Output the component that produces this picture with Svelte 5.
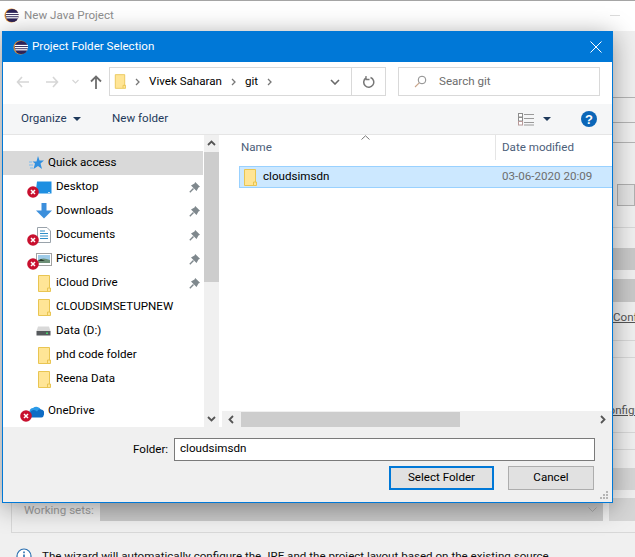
<script>
  const quick = [
    { name: 'Desktop', icon: 'desktop', pin: true, bad: true },
    { name: 'Downloads', icon: 'downloads', pin: true, bad: false },
    { name: 'Documents', icon: 'documents', pin: true, bad: true },
    { name: 'Pictures', icon: 'pictures', pin: true, bad: true },
    { name: 'iCloud Drive', icon: 'folder', pin: true, bad: false },
    { name: 'CLOUDSIMSETUPNEW', icon: 'folder', pin: false, bad: false },
    { name: 'Data (D:)', icon: 'drive', pin: false, bad: false },
    { name: 'phd code folder', icon: 'folder', pin: false, bad: false },
    { name: 'Reena Data', icon: 'folder', pin: false, bad: false }
  ];
</script>

{#snippet eclipse()}
  <svg class="eclipse" width="15" height="15" viewBox="0 0 16 16">
    <circle cx="8" cy="8" r="7.500" fill="#e8942e" />
    <circle cx="8.700" cy="8" r="7" fill="#2c2358" />
    <rect x="2" y="5.200" width="14" height="1.300" fill="#fff" />
    <rect x="2" y="7.500" width="14" height="1.300" fill="#fff" />
    <rect x="2.400" y="9.800" width="13" height="1.300" fill="#fff" />
  </svg>
{/snippet}

{#snippet folder()}
  <svg width="14" height="17" viewBox="0 0 14 17">
    <path d="M1.500 .5H12.500V13H13.500V16.500H1.500Z" fill="#ffe596" stroke="#e9c552" />
    <path d="M10.500 16V13H13" fill="none" stroke="#e9c552" />
  </svg>
{/snippet}

{#snippet badge()}
  <svg class="badge" width="12" height="12" viewBox="0 0 12 12">
    <circle cx="6" cy="6" r="5.800" fill="#c8102e" />
    <path d="M4 4L8 8M8 4L4 8" stroke="#fff" stroke-width="1.500" />
  </svg>
{/snippet}

{#snippet pin()}
  <svg class="pin" width="11" height="11" viewBox="0 0 11 11">
    <path d="M6.200 0L11 4.800L9.500 5.500L7.500 9L2 3.500L5.500 1.500Z" fill="#7f888d" />
    <path d="M4.500 6.500L.8 10.200" stroke="#7f888d" stroke-width="1.400" />
  </svg>
{/snippet}

{#snippet navIcon(kind)}
  {#if kind === 'folder'}
    {@render folder()}
  {:else if kind === 'desktop'}
    <svg width="17" height="13" viewBox="0 0 17 13">
      <path d="M2 .5H16.500V12.500H0.500Z" fill="#1e8fe1" />
      <rect x="13" y="11" width="2" height="1" fill="#bfe3fb" />
    </svg>
  {:else if kind === 'downloads'}
    <svg width="16" height="16" viewBox="0 0 16 16">
      <path d="M5.500 0H10.500V7.500H16L8 15.500L0 7.500H5.500Z" fill="#3c8fdc" />
    </svg>
  {:else if kind === 'documents'}
    <svg width="14" height="16" viewBox="0 0 14 16">
      <path d="M.5 .5H10L13.500 4V15.500H.5Z" fill="#fff" stroke="#9aa3ab" />
      <path d="M3 4H8M3 6.500H11M3 9H11M3 11.500H11" stroke="#2f8fc9" />
    </svg>
  {:else if kind === 'pictures'}
    <svg width="16" height="13" viewBox="0 0 16 13">
      <rect x=".5" y=".5" width="15" height="12" fill="#fff" stroke="#a2a2a2" />
      <rect x="2" y="2" width="12" height="5" fill="#9fcbe8" />
      <path d="M2 7Q7 4 14 7V10H2Z" fill="#6d8f76" />
      <path d="M2 8H9L5 6Z" fill="#273a2c" />
    </svg>
  {:else if kind === 'drive'}
    <svg width="15" height="10" viewBox="0 0 15 10">
      <path d="M2 .5H13L14.500 5H.5Z" fill="#d9d9d9" />
      <rect x=".5" y="5" width="14" height="4.500" fill="#55595c" />
      <rect x="10" y="6.500" width="2" height="1.500" fill="#44d36a" />
    </svg>
  {/if}
{/snippet}

<div class="desk">
  <div class="wizard">
    <header class="wiz-title">
      {@render eclipse()}
      <span class="t">New Java Project</span>
      <i class="minimize"></i>
    </header>
    <div class="wiz-body">
      <div class="rule r1"></div>
      <div class="rule r2"></div>
      <div class="rule r3"></div>
      <div class="wbtn b1"></div>
      <div class="rule r4"></div>
      <div class="bar b2"></div>
      <div class="bar b3"></div>
      <div class="link l1"><u>Conf</u></div>
      <div class="rule r5"></div>
      <div class="rule r6"></div>
      <div class="link l2"><u>Configu</u></div>
      <div class="rule r7"></div>
      <div class="rule r8"></div>
      <div class="bar b4"></div>
      <div class="sets">
        <span class="sets-label">Working sets:</span>
        <span class="sets-select">
          <svg width="9" height="5" viewBox="0 0 9 5"><path d="M.5 .5L4.500 4.500L8.500 .5" fill="none" stroke="#a8a8a8" /></svg>
        </span>
        <span class="sets-btn"></span>
      </div>
      <div class="info">
        <svg width="16" height="16" viewBox="0 0 16 16">
          <circle cx="8" cy="8" r="7" fill="#fff" stroke="#2a6fb0" stroke-width="1.200" />
          <rect x="7.200" y="3.500" width="1.600" height="1.700" fill="#2a6fb0" />
          <rect x="7.200" y="6.500" width="1.600" height="6" fill="#2a6fb0" />
        </svg>
        <span>The wizard will automatically configure the JRE and the project layout based on the existing source</span>
      </div>
    </div>
  </div>

  <section class="dialog">
    <header class="title">
      {@render eclipse()}
      <span class="t">Project Folder Selection</span>
      <svg class="close" width="12" height="12" viewBox="0 0 12 12">
        <path d="M.5 .5L11.500 11.500M11.500 .5L.5 11.500" stroke="#fff" stroke-width="1" />
      </svg>
    </header>

    <div class="nav">
      <div class="arrows">
        <svg width="13" height="12" viewBox="0 0 13 12"><path d="M6 1L1.500 6L6 11M1.500 6H13" fill="none" stroke="#d6d6d6" stroke-width="1.600" /></svg>
        <svg class="fwd" width="13" height="12" viewBox="0 0 13 12"><path d="M7 1L11.500 6L7 11M11.500 6H0" fill="none" stroke="#d6d6d6" stroke-width="1.600" /></svg>
        <svg class="down" width="7" height="5" viewBox="0 0 7 5"><path d="M.5 1L3.500 4L6.500 1" fill="none" stroke="#d6d6d6" stroke-width="1.200" /></svg>
        <svg class="up" width="12" height="14" viewBox="0 0 12 14"><path d="M1 6.500L6 1.500L11 6.500M6 1.500V14" fill="none" stroke="#6e6e6e" stroke-width="1.800" /></svg>
      </div>
      <div class="address">
        <span class="addr-folder">{@render folder()}</span>
        <svg class="crumb" width="5" height="8" viewBox="0 0 5 8"><path d="M1 1L4 4L1 7" fill="none" stroke="#777" stroke-width="1.300" /></svg>
        <span class="addr-name t">Vivek Saharan</span>
        <svg class="crumb" width="5" height="8" viewBox="0 0 5 8"><path d="M1 1L4 4L1 7" fill="none" stroke="#777" stroke-width="1.300" /></svg>
        <span class="addr-name t">git</span>
        <svg class="crumb" width="5" height="8" viewBox="0 0 5 8"><path d="M1 1L4 4L1 7" fill="none" stroke="#777" stroke-width="1.300" /></svg>
        <span class="grow"></span>
        <span class="addr-drop">
          <svg width="10" height="6" viewBox="0 0 10 6"><path d="M1 1L5 5L9 1" fill="none" stroke="#6a6a6a" stroke-width="1.600" /></svg>
        </span>
        <span class="addr-refresh">
          <svg width="12" height="12" viewBox="0 0 12 12"><path d="M7.500 1.500A5 5 0 1 1 3 2" fill="none" stroke="#777" stroke-width="1.500" /><path d="M3 0V3.500H6.500" fill="none" stroke="#777" stroke-width="1.300" /></svg>
        </span>
      </div>
      <div class="search">
        <svg width="13" height="13" viewBox="0 0 13 13"><circle cx="8" cy="5" r="3.800" fill="none" stroke="#8a8a8a" /><path d="M5.200 7.800L1 12" stroke="#c9a58a" stroke-width="1.100" /></svg>
        <span class="t">Search git</span>
      </div>
    </div>

    <div class="toolbar">
      <span class="organize t">Organize</span>
      <i class="caret"></i>
      <span class="newfolder t">New folder</span>
      <span class="grow"></span>
      <svg class="views" width="16" height="13" viewBox="0 0 16 13">
        <rect x=".5" y=".5" width="4" height="3.500" fill="#fff" stroke="#8d8d8d" />
        <rect x=".5" y="4.500" width="4" height="3.500" fill="#fff" stroke="#8d8d8d" />
        <rect x=".5" y="8.500" width="4" height="3.500" fill="#fff" stroke="#b89a9a" />
        <path d="M6 1.500H16M6 5.500H16M6 9.500H16M6 12H16" stroke="#9a9a9a" />
      </svg>
      <i class="caret viewcaret"></i>
      <svg class="help" width="16" height="16" viewBox="0 0 16 16">
        <circle cx="8" cy="8" r="8" fill="#0b66b8" />
        <text x="8" y="12.500" text-anchor="middle" class="help-q">?</text>
      </svg>
    </div>

    <div class="panes">
      <nav class="tree">
        <div class="row top selected">
          <svg width="15" height="14" viewBox="0 0 15 14">
            <path d="M9 0L10.500 4.500H15L11.500 7.500L13 13L9 10L4.500 13L6 7.500L3.500 5.500H7.500Z" fill="#2f8fe0" />
            <path d="M0 6H3M0 9H4M1 12H4" stroke="#7cbcef" />
          </svg>
          <span class="t">Quick access</span>
        </div>
        {#each quick as item}
          <div class="row">
            {#if item.bad}{@render badge()}{/if}
            <span class="icon">{@render navIcon(item.icon)}</span>
            <span class="label t">{item.name}</span>
            {#if item.pin}{@render pin()}{/if}
          </div>
        {/each}
        <div class="row top drive">
          {@render badge()}
          <svg width="17" height="13" viewBox="0 0 17 13">
            <path d="M1.500 11A2.500 2.500 0 0 1 2.500 6.500A4 4 0 0 1 6 3A5 5 0 0 1 14 5Q16.500 6 16.500 9Q16.500 11 14.500 11Z" fill="#2c9be8" />
            <path d="M1.500 12.500A2.500 2.500 0 0 1 3 8A4 4 0 0 1 10 6.500A3 3 0 0 1 16.800 10Q16.500 12.500 14.500 12.500Z" fill="#0f6cc4" />
          </svg>
          <span class="t">OneDrive</span>
        </div>
      </nav>

      <div class="vscroll">
        <svg width="9" height="6" viewBox="0 0 9 6"><path d="M1 5L4.500 1.500L8 5" fill="none" stroke="#555" stroke-width="1.800" /></svg>
        <div class="vthumb"></div>
        <span class="grow"></span>
        <svg width="9" height="6" viewBox="0 0 9 6"><path d="M1 1L4.500 4.500L8 1" fill="none" stroke="#555" stroke-width="1.800" /></svg>
      </div>

      <div class="files">
        <div class="head">
          <span class="col-name t">Name</span>
          <svg class="sort" width="9" height="5" viewBox="0 0 9 5"><path d="M.5 4.500L4.500 .8L8.500 4.500" fill="none" stroke="#777" /></svg>
          <span class="col-date t">Date modified</span>
        </div>
        <div class="file">
          <span class="file-icon">{@render folder()}</span>
          <span class="file-name t">cloudsimsdn</span>
          <span class="file-date t">03-06-2020 20:09</span>
        </div>
        <span class="grow"></span>
        <div class="hscroll">
          <svg width="6" height="9" viewBox="0 0 6 9"><path d="M5 1L1.500 4.500L5 8" fill="none" stroke="#555" stroke-width="1.800" /></svg>
          <div class="hthumb"></div>
          <span class="grow"></span>
          <svg width="6" height="9" viewBox="0 0 6 9"><path d="M1 1L4.500 4.500L1 8" fill="none" stroke="#555" stroke-width="1.800" /></svg>
        </div>
      </div>
    </div>

    <footer class="foot">
      <div class="foot-row">
        <label for="folder-input">Folder:</label>
        <input id="folder-input" value="cloudsimsdn" />
      </div>
      <div class="foot-buttons">
        <button class="primary">Select Folder</button>
        <button>Cancel</button>
      </div>
      <svg class="grip" width="9" height="9" viewBox="0 0 9 9">
        <path d="M6 0h2v2H6zM3 3h2v2H3zM6 3h2v2H6zM0 6h2v2H0zM3 6h2v2H3zM6 6h2v2H6z" fill="#b5b5b5" />
      </svg>
    </footer>
  </section>
</div>

<style>
  :global(body) { margin: 0; background: #f0f0f0; }
  .desk {
    position: relative;
    width: 635px;
    height: 557px;
    overflow: hidden;
    font-family: Roboto, "Liberation Sans", sans-serif;
    font-size: 11.6px;
    color: #000;
  }
  .grow { flex: 1; }
  .t { padding-bottom: 2px; }

  /* wizard behind */
  .wizard { display: flex; flex-direction: column; height: 100%; border-top: 1px solid #a5a5a5; box-sizing: border-box; }
  .wiz-title {
    height: 30px; background: #fff; display: flex; align-items: center; gap: 5px;
    padding-left: 4px; color: #8e8e8e; flex: none; position: relative; padding-bottom: 1px; box-sizing: border-box;
  }
  .minimize { position: absolute; left: 610px; top: 14px; width: 10px; height: 1px; background: #dcdcdc; }
  .wiz-body { flex: 1; padding-left: 11px; overflow: hidden; }
  .rule { height: 1px; background: #b4b4b4; }
  .r1 { margin-top: 66px; }
  .r2 { margin-top: 24px; }
  .r3 { margin-top: 19px; }
  .wbtn { height: 22px; margin: 41px 0 0 606px; background: #e4e4e4; border: 1px solid #b0b0b0; box-sizing: border-box; }
  .r4 { margin-top: 21px; background: #d8d8d8; }
  .bar { background: #c9c9c9; margin-left: 100px; }
  .b2 { height: 22px; margin-top: 20px; }
  .b3 { height: 23px; margin-top: 9px; }
  .link { height: 16px; color: #555; white-space: nowrap; }
  .l1 { margin: 8px 0 0 602px; }
  .r5 { margin-top: 14px; background: #d8d8d8; }
  .r6 { margin-top: 16px; background: #d8d8d8; }
  .l2 { margin: 45px 0 0 590px; }
  .r7 { margin-top: 13px; background: #d8d8d8; }
  .r8 { margin-top: 16px; background: #d8d8d8; }
  .b4 { height: 22px; margin-top: 18px; background: #d6d6d6; }
  .sets {
    height: 35px; margin: 8px 0 0 0; width: 700px; box-sizing: border-box;
    border-bottom: 1px solid #d8d8d8; border-left: 1px solid #d8d8d8; display: flex; align-items: flex-start; padding-left: 12px;
  }
  .sets-label { width: 76px; color: #a0a0a0; line-height: 24px; }
  .sets-select { width: 503px; height: 23px; background: #c9c9c9; display: flex; align-items: center; justify-content: flex-end; padding-right: 6px; box-sizing: border-box; }
  .sets-btn { width: 40px; height: 23px; margin-left: 6px; background: #d6d6d6; }
  .info { display: flex; gap: 10px; padding: 12px 0 0 5px; white-space: nowrap; align-items: flex-start; color: #111; line-height: 22px; }
  .info svg { flex: none; margin-top: 3px; }

  /* dialog */
  .dialog {
    position: absolute; left: 2px; top: 31px; width: 611px; height: 472px; box-sizing: border-box;
    border: 1px solid #0078d7; background: #f0f0f0; display: flex; flex-direction: column;
    box-shadow: 0 4px 24px rgba(0, 0, 0, 0.38);
  }
  .title {
    height: 30px; flex: none; background: #0078d7; display: flex; align-items: center;
    padding-left: 10px; color: #fff; gap: 4px; position: relative;
  }
  .close { position: absolute; right: 10px; top: 9px; }

  .nav { height: 42px; flex: none; background: #fff; display: flex; align-items: flex-start; padding-top: 5px; box-sizing: border-box; }
  .arrows { width: 106px; height: 29px; display: flex; align-items: center; padding-left: 13px; box-sizing: border-box; flex: none; }
  .fwd { margin-left: 17px; }
  .down { margin-left: 13px; }
  .up { margin-left: 11px; }
  .address {
    width: 277px; height: 29px; box-sizing: border-box; border: 1px solid #d9d9d9; display: flex; align-items: center;
    padding-left: 4px; flex: none;
  }
  .addr-folder { display: flex; width: 12px; }
  .addr-name { margin-left: 9px; }
  .crumb { margin-left: 9px; }
  .addr-drop { width: 32px; height: 100%; display: flex; align-items: center; justify-content: center; border-right: 1px solid #d9d9d9; }
  .addr-refresh { width: 33px; display: flex; justify-content: center; }
  .search {
    width: 202px; height: 29px; margin-left: 12px; box-sizing: border-box; border: 1px solid #d9d9d9; flex: none;
    display: flex; align-items: center; gap: 12px; padding-left: 15px; color: #6d6d6d;
  }

  .toolbar {
    height: 31px; flex: none; box-sizing: border-box; background: #f5f6f7; border-bottom: 1px solid #e5e5e5;
    display: flex; align-items: center; color: #1e395b; padding-left: 18px;
  }
  .organize { width: 47px; }
  .caret { width: 0; height: 0; border: 4px solid transparent; border-top: 4px solid #1e395b; border-bottom: 0; margin-left: 5px; }
  .newfolder { margin-left: 31px; }
  .viewcaret { margin-left: 9px; }
  .help { margin: 0 15px 0 30px; }
  .help-q { font: bold 13px "Liberation Sans", sans-serif; fill: #fff; }

  .panes { height: 292px; flex: none; display: flex; background: #fff; }
  .tree { width: 200px; flex: none; padding-top: 16px; overflow: hidden; box-sizing: border-box; }
  .row { height: 24px; display: flex; align-items: center; position: relative; padding-left: 32px; }
  .row.top { padding-left: 26px; gap: 4px; }
  .selected { background: #d9d9d9; }
  .row.drive { margin-top: 8px; padding-left: 24px; gap: 4px; }
  .icon { display: flex; justify-content: center; width: 17px; margin-right: 4px; }
  .label { flex: 1; }
  .badge { position: absolute; left: 24px; top: 11px; }
  .drive .badge { left: 17px; top: 11px; }
  .pin { margin-right: 3px; }
  .vscroll {
    width: 15px; margin-left: 1px; flex: none; background: #f0f0f0; display: flex; flex-direction: column; align-items: center;
    padding: 5px 0; box-sizing: border-box;
  }
  .vthumb { width: 15px; height: 130px; background: #cdcdcd; margin-top: 6px; }
  .files { flex: 1; margin-left: 3px; display: flex; flex-direction: column; min-width: 0; }
  .head { height: 25px; flex: none; position: relative; display: flex; color: #4c607a; align-items: center; }
  .col-name { margin-left: 19px; width: 254px; }
  .sort { position: absolute; left: 139px; top: 0; }
  .col-date { border-left: 1px solid #e5e5e5; padding-left: 6px; height: 100%; box-sizing: border-box; display: flex; align-items: center; }
  .file {
    height: 22px; margin: 6px 0 0 17px; flex: none; box-sizing: border-box; background: #cce8ff;
    border: 1px solid #99d1ff; border-right: 0; display: flex; align-items: center; position: relative;
  }
  .file-icon { display: flex; margin-left: 3px; width: 20px; }
  .file-name { width: 239px; }
  .file-date { color: #6d6d6d; }
  .hscroll { height: 16px; flex: none; background: #f0f0f0; display: flex; align-items: center; padding: 0 6px; box-sizing: border-box; }
  .hthumb { width: 219px; height: 15px; background: #cdcdcd; margin-left: 7px; }

  .foot { flex: 1; position: relative; }
  .foot-row { display: flex; align-items: center; height: 24px; margin-top: 10px; padding-left: 130px; }
  label { width: 41px; }
  input {
    width: 421px; height: 23px; box-sizing: border-box; border: 1px solid #7a7a7a; font: inherit; padding: 0 5px 2px; background: #fff; color: #000; outline: none; border-radius: 0;
  }
  .foot-buttons { display: flex; justify-content: flex-end; gap: 14px; padding-right: 18px; margin-top: 5px; }
  button {
    width: 86px; height: 24px; box-sizing: border-box; background: #e1e1e1; border: 1px solid #adadad; font: inherit; color: #000; padding: 0 0 2px; border-radius: 0;
  }
  .primary { width: 105px; border: 2px solid #0078d7; }
  .grip { position: absolute; right: 3px; bottom: 2px; }
</style>
